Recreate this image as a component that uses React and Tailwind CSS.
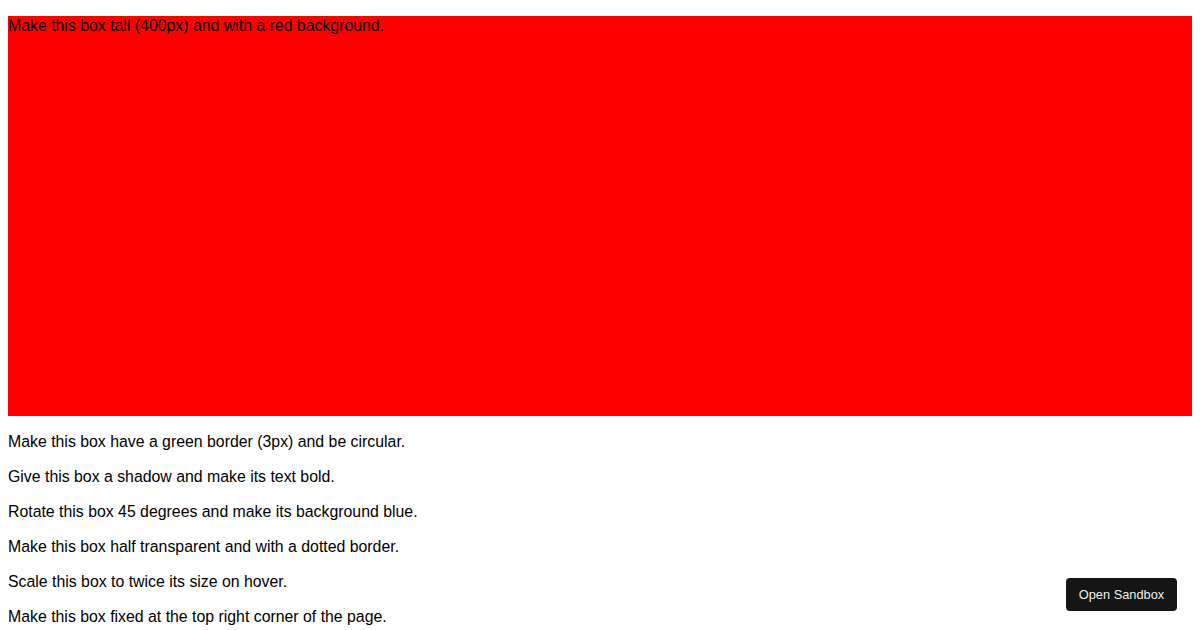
const tasks = [
  'Make this box have a green border (3px) and be circular.',
  'Give this box a shadow and make its text bold.',
  'Rotate this box 45 degrees and make its background blue.',
  'Make this box half transparent and with a dotted border.',
  'Scale this box to twice its size on hover.',
  'Make this box fixed at the top right corner of the page.',
];

export default function App() {
  return (
    <div className="min-h-[630px] bg-white px-2 pt-4 text-black text-[15.85px] leading-[19px] font-['Liberation_Sans',Arial,sans-serif]">
      <div className="h-[400px] bg-[#ff0000]">
        <p>Make this box tall (400px) and with a red background.</p>
      </div>
      {tasks.map((t, i) => (
        <p key={i} className="mt-4">
          {t}
        </p>
      ))}
      <button className="fixed right-[23px] bottom-[19px] w-[111px] h-[33px] rounded-[4px] bg-[#151515] text-[12.8px] text-[#f0f0f0] font-['Liberation_Sans',Arial,sans-serif]">
        Open Sandbox
      </button>
    </div>
  );
}
